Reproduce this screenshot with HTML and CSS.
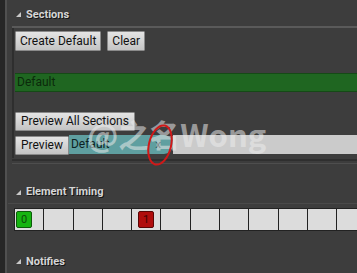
FILE: index.html
```html
<!DOCTYPE html>
<html>
<head>
<meta charset="utf-8">
<link rel="stylesheet" href="styles.css">
</head>
<body>
<div class="page">
  <div class="edge"></div>
  <div class="edgeline"></div>
  <div class="content">
    <div class="header"><span class="tri"></span><span class="htext">Sections</span></div>
    <div class="hline"></div>
    <div class="panel">
      <div class="btnrow">
        <div class="btn">Create Default</div>
        <div class="btn">Clear</div>
      </div>
      <div class="greenbar">Default</div>
      <div class="btn single">Preview All Sections</div>
      <div class="prevrow">
        <div class="btn">Preview</div>
        <div class="pill"><span>Default</span><span class="x">x</span></div>
        <div class="graybar"></div>
      </div>
    </div>
    <div class="panelbottom"></div>
    <div class="header h2"><span class="tri"></span><span class="htext">Element Timing</span></div>
    <div class="timing">
      <div class="cell"><span class="mark green">0</span></div>
      <div class="cell"></div>
      <div class="cell"></div>
      <div class="cell"></div>
      <div class="cell"><span class="mark red">1</span></div>
      <div class="cell"></div>
      <div class="cell"></div>
      <div class="cell"></div>
      <div class="cell"></div>
      <div class="cell"></div>
      <div class="cell"></div>
      <div class="cell"></div>
      <div class="cell"></div>
    </div>
    <div class="header h3"><span class="tri"></span><span class="htext">Notifies</span></div>
  </div>
  <div class="watermark">@之名Wong</div>
  <svg class="circle" width="32" height="46" viewBox="0 0 32 46"><ellipse cx="16" cy="23" rx="11" ry="20" transform="rotate(14 16 23)" fill="none" stroke="#d01818" stroke-width="2"/></svg>
</div>
</body>
</html>
```
FILE: styles.css
```css
html, body { margin: 0; padding: 0; }
body {
  background: #3d3d3d;
  font-family: Roboto, "Liberation Sans", sans-serif;
  width: 357px;
  height: 273px;
  overflow: hidden;
}
.page {
  position: relative;
  display: flex;
  height: 273px;
  overflow: hidden;
}
.edge { width: 5px; background: #262626; flex: none; }
.edgeline { width: 2px; background: #505050; flex: none; }
.content { flex: 1; padding-left: 1px; min-width: 0; overflow: hidden; }
.header {
  height: 26px;
  display: flex;
  align-items: center;
  padding-left: 8px;
  padding-top: 2px;
  box-sizing: border-box;
}
.tri {
  width: 0; height: 0;
  border-left: 5px solid transparent;
  border-bottom: 5px solid #c8c8c8;
  margin-right: 5px;
  margin-top: 1px;
}
.htext {
  color: #d6d6d6;
  font-weight: bold;
  font-size: 11px;
  text-shadow: 1px 1px 0 #151515;
}
.hline {
  height: 2px;
  background: #5a5a5a;
  margin-left: 4px;
}
.panel {
  margin-left: 4px;
  border-left: 2px solid #2e2e2e;
  padding-top: 3px;
  padding-bottom: 3px;
  padding-left: 1px;
}
.btnrow { display: flex; gap: 6px; }
.btn {
  background: linear-gradient(#e4e4e4, #c4c4c4);
  border: 1px solid #8a8a8a;
  border-radius: 1px;
  color: #111;
  font-size: 12px;
  height: 18px;
  line-height: 18px;
  padding: 0 4px;
  box-sizing: content-box;
  white-space: nowrap;
  flex: none;
}
.greenbar {
  margin-top: 22px;
  height: 17px;
  line-height: 17px;
  background: #1f6621;
  border-top: 1px solid #154a16;
  border-bottom: 1px solid #154a16;
  color: #0b2a0b;
  font-size: 12px;
  padding-left: 2px;
}
.single { display: inline-block; margin-top: 20px; height: 17px; line-height: 17px; padding: 0 5px; }
.prevrow {
  display: flex;
  margin-top: 5px;
  align-items: flex-start;
}
.prevrow .btn { height: 17px; line-height: 17px; padding: 0 5px; }
.pill {
  background: #5f9fa0;
  border-radius: 0 9px 9px 0;
  height: 19px;
  line-height: 19px;
  width: 104px;
  margin-top: -1px;
  font-size: 12px;
  color: #0c2222;
  padding-left: 2px;
  display: flex;
  flex: none;
  box-sizing: border-box;
}
.pill .x { margin-left: auto; margin-right: 12px; font-size: 11px; }
.graybar {
  flex: 1;
  height: 19px;
  margin-top: -1px;
  background: #cbcbcb;
}
.panelbottom {
  height: 2px;
  border-top: 2px solid #2f2f2f;
  border-bottom: 1px solid #4e4e4e;
  margin-left: 4px;
  margin-top: 1px;
}
.h2 { margin-top: 14px; border-bottom: 1px solid #4a4a4a; }
.timing {
  display: flex;
  margin-top: 4px;
  margin-left: 6px;
  height: 23px;
  background: #222;
  padding: 1px 0 1px 1px;
  box-sizing: border-box;
  overflow: hidden;
}
.cell {
  flex: none;
  width: 28.3px;
  margin-right: 1px;
  background: #dcdcdc;
  display: flex;
  align-items: center;
}
.mark {
  width: 16px;
  height: 17px;
  border-radius: 2px;
  font-size: 11px;
  line-height: 15px;
  text-align: center;
  margin-left: 1px;
  box-sizing: border-box;
}
.green { background: #16b410; border: 1px solid #0c5c0a; color: #0d4a0b; }
.red { background: #b00c0c; border: 1px solid #5a0505; color: #3e0202; margin-left: 6px; }
.h3 { margin-top: 16px; }
.watermark {
  position: absolute;
  left: 87px;
  top: 111px;
  font-size: 31px;
  font-weight: bold;
  color: rgba(235,235,235,0.55);
  font-family: "Noto Sans CJK SC", Roboto, sans-serif;
  white-space: nowrap;
  pointer-events: none;
}
.circle { position: absolute; left: 144px; top: 122px; }
```
